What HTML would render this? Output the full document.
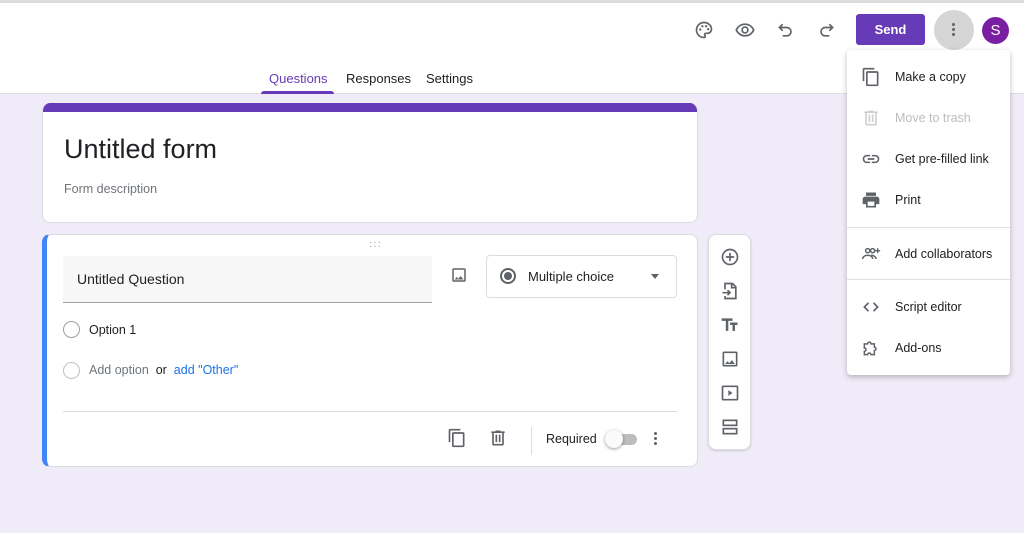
<!DOCTYPE html>
<html><head><style>
*{box-sizing:border-box;margin:0;padding:0}
body{width:1024px;height:533px;overflow:hidden;background:#f0ebf8;font-family:"Liberation Sans",sans-serif;position:relative;color:#202124}
.abs{position:absolute}
#hdr{left:0;top:0;width:1024px;height:94px;background:#fff;border-top:3px solid #dcdcdc;border-bottom:1px solid #e0e0e0}
.tab{top:68px;font-size:13px;color:#202124}
.card{background:#fff;border-radius:8px;border:1px solid #dadce0}
.mi{left:0;width:163px;height:41px;display:flex;align-items:center;font-size:12.5px;color:#202124}
.mi svg{margin-left:14px;margin-right:14px;width:20px;height:20px}
.ic{fill:#5f6368}
</style></head><body>
<div id="hdr" class="abs">
 <svg class="abs" style="left:694px;top:17px" width="20" height="20" viewBox="0 0 24 24"><path fill="none" stroke="#5f6368" stroke-width="2" d="M12 3a9 9 0 0 0 0 18c1 0 1.5-.7 1.5-1.5 0-.4-.2-.7-.4-1-.2-.3-.4-.6-.4-1 0-.8.7-1.5 1.5-1.5H16a5 5 0 0 0 5-5c0-4.4-4-8-9-8z"/><circle cx="7.5" cy="11.5" r="1.4" fill="#5f6368"/><circle cx="10" cy="7.5" r="1.4" fill="#5f6368"/><circle cx="14.5" cy="7.5" r="1.4" fill="#5f6368"/><circle cx="17" cy="11" r="1.4" fill="#5f6368"/></svg>
 <svg class="abs" style="left:734px;top:17px" width="22" height="20" viewBox="0 0 24 24"><path fill="none" stroke="#5f6368" stroke-width="2" d="M1.5 12C4 7 8 5 12 5s8 2 10.5 7C20 17 16 19 12 19s-8-2-10.5-7z"/><circle cx="12" cy="12" r="3.5" fill="none" stroke="#5f6368" stroke-width="2"/></svg>
 <svg class="abs" style="left:776px;top:17px" width="20" height="20" viewBox="0 0 24 24"><path fill="none" stroke="#5f6368" stroke-width="2" d="M8 5L4 9l4 4M4 9h9a5 5 0 0 1 0 10H8"/></svg>
 <svg class="abs" style="left:816px;top:17px" width="20" height="20" viewBox="0 0 24 24"><path fill="none" stroke="#5f6368" stroke-width="2" d="M16 5l4 4-4 4M20 9h-9a5 5 0 0 0 0 10h5"/></svg>
 <div class="abs" style="left:856px;top:11px;width:69px;height:31px;background:#673ab7;border-radius:3px;color:#fff;font-size:13px;font-weight:bold;text-align:center;line-height:31px">Send</div>
 <div class="abs" style="left:934px;top:7px;width:40px;height:40px;border-radius:50%;background:#d5d5d5"></div>
 <div class="abs" style="left:952px;top:20px;width:3px;height:3px;border-radius:50%;background:#5f6368;box-shadow:0 5px 0 #5f6368,0 10px 0 #5f6368"></div>
 <div class="abs" style="left:982px;top:14px;width:27px;height:27px;border-radius:50%;background:#7b1fa2;color:#fff;font-size:15px;text-align:center;line-height:27px">S</div>
 <div class="abs tab" style="left:269px;color:#673ab7">Questions</div>
 <div class="abs tab" style="left:346px">Responses</div>
 <div class="abs tab" style="left:426px">Settings</div>
 <div class="abs" style="left:261px;top:88px;width:73px;height:3px;background:#673ab7;border-radius:3px 3px 0 0"></div>
</div>

<div class="abs card" style="left:42px;top:103px;width:656px;height:120px;border-top:none;overflow:hidden">
 <div style="height:9px;background:#673ab7"></div>
 <div class="abs" style="left:21px;top:31px;font-size:27px">Untitled form</div>
 <div class="abs" style="left:21px;top:79px;font-size:12.5px;color:#70757a">Form description</div>
</div>

<div class="abs card" style="left:42px;top:234px;width:656px;height:233px;border-left:5px solid #4285f4">
 <div class="abs" style="left:322px;top:6px;color:#9aa0a6;font-size:10px;letter-spacing:1px;line-height:4px">···<br>···</div>
 <div class="abs" style="left:16px;top:21px;width:369px;height:47px;background:#f6f7f6;border-bottom:1px solid #9e9e9e"></div>
 <div class="abs" style="left:30px;top:36px;font-size:14px">Untitled Question</div>
 <svg class="abs" style="left:403px;top:31px" width="18" height="18" viewBox="0 0 24 24"><path class="ic" d="M19 5v14H5V5h14m0-2H5a2 2 0 0 0-2 2v14a2 2 0 0 0 2 2h14a2 2 0 0 0 2-2V5a2 2 0 0 0-2-2zm-4.9 10.3l-3 3.8-2-2.5L6 18h12z"/></svg>
 <div class="abs" style="left:439px;top:20px;width:191px;height:43px;border:1px solid #dadce0;border-radius:4px"></div>
 <div class="abs" style="left:453px;top:33px;width:16px;height:16px;border:2px solid #5f6368;border-radius:50%"></div>
 <div class="abs" style="left:457px;top:37px;width:8px;height:8px;background:#5f6368;border-radius:50%"></div>
 <div class="abs" style="left:481px;top:34px;font-size:13px">Multiple choice</div>
 <div class="abs" style="left:604px;top:39px;border:4.5px solid transparent;border-top:5px solid #5f6368"></div>
 <div class="abs" style="left:16px;top:86px;width:17px;height:17px;border:1.5px solid #9aa0a6;border-radius:50%"></div>
 <div class="abs" style="left:42px;top:88px;font-size:12.5px">Option 1</div>
 <div class="abs" style="left:16px;top:127px;width:17px;height:17px;border:1.5px solid #bdc1c6;border-radius:50%"></div>
 <div class="abs" style="left:42px;top:128px;font-size:12.5px;color:#70757a">Add option <span style="color:#202124">&nbsp;or&nbsp;</span> <span style="color:#1a73e8">add "Other"</span></div>
 <div class="abs" style="left:16px;top:176px;width:614px;height:1px;background:#dadce0"></div>
 <svg class="abs" style="left:400px;top:193px" width="20" height="20" viewBox="0 0 24 24"><path class="ic" d="M16 1H4a2 2 0 0 0-2 2v14h2V3h12V1zm3 4H8a2 2 0 0 0-2 2v14a2 2 0 0 0 2 2h11a2 2 0 0 0 2-2V7a2 2 0 0 0-2-2zm0 16H8V7h11v14z"/></svg>
 <svg class="abs" style="left:441px;top:193px" width="20" height="20" viewBox="0 0 24 24"><path class="ic" d="M15 4V3H9v1H4v2h1v13a2 2 0 0 0 2 2h10a2 2 0 0 0 2-2V6h1V4h-5zm2 15H7V6h10v13zM9 8h2v9H9zm4 0h2v9h-2z"/></svg>
 <div class="abs" style="left:484px;top:192px;width:1px;height:28px;background:#dadce0"></div>
 <div class="abs" style="left:499px;top:197px;font-size:12.5px">Required</div>
 <div class="abs" style="left:564px;top:199px;width:26px;height:11px;border-radius:6px;background:#bdbdbd"></div>
 <div class="abs" style="left:558px;top:195px;width:18px;height:18px;border-radius:50%;background:#fafafa;box-shadow:0 1px 3px rgba(0,0,0,.4)"></div>
 <div class="abs" style="left:607px;top:197px;width:3px;height:3px;border-radius:50%;background:#5f6368;box-shadow:0 5px 0 #5f6368,0 10px 0 #5f6368"></div>
</div>

<div class="abs card" style="left:708px;top:234px;width:43px;height:216px;box-shadow:0 1px 2px rgba(0,0,0,.15)">
 <svg class="abs" style="left:11px;top:12px" width="20" height="20" viewBox="0 0 24 24"><circle cx="12" cy="12" r="9" fill="none" stroke="#5f6368" stroke-width="2"/><path d="M12 7v10M7 12h10" stroke="#5f6368" stroke-width="2"/></svg>
 <svg class="abs" style="left:11px;top:46px" width="20" height="20" viewBox="0 0 24 24"><path fill="none" stroke="#5f6368" stroke-width="2" d="M6 10V3h9l4 4v14H6v-3M14 3v5h5M3 14h9m-3-3l3 3-3 3"/></svg>
 <svg class="abs" style="left:11px;top:80px" width="20" height="20" viewBox="0 0 24 24"><path class="ic" d="M2 4v3h5v12h3V7h5V4H2zm19 5h-9v3h3v7h3v-7h3V9z"/></svg>
 <svg class="abs" style="left:11px;top:114px" width="20" height="20" viewBox="0 0 24 24"><path class="ic" d="M19 5v14H5V5h14m0-2H5a2 2 0 0 0-2 2v14a2 2 0 0 0 2 2h14a2 2 0 0 0 2-2V5a2 2 0 0 0-2-2zm-4.9 10.3l-3 3.8-2-2.5L6 18h12z"/></svg>
 <svg class="abs" style="left:11px;top:148px" width="20" height="20" viewBox="0 0 24 24"><rect x="3" y="4" width="18" height="16" rx="1" fill="none" stroke="#5f6368" stroke-width="2"/><path class="ic" d="M10 8.5v7l5-3.5z"/></svg>
 <svg class="abs" style="left:11px;top:182px" width="20" height="20" viewBox="0 0 24 24"><rect x="4" y="4" width="16" height="6" fill="none" stroke="#5f6368" stroke-width="2"/><rect x="4" y="14" width="16" height="6" fill="none" stroke="#5f6368" stroke-width="2"/></svg>
</div>

<div class="abs" style="left:847px;top:50px;width:163px;height:325px;background:#fff;border-radius:4px;box-shadow:0 2px 6px rgba(0,0,0,.25)">
 <div class="abs mi" style="top:6px"><svg viewBox="0 0 24 24"><path class="ic" d="M16 1H4a2 2 0 0 0-2 2v14h2V3h12V1zm3 4H8a2 2 0 0 0-2 2v14a2 2 0 0 0 2 2h11a2 2 0 0 0 2-2V7a2 2 0 0 0-2-2zm0 16H8V7h11v14z"/></svg>Make a copy</div>
 <div class="abs mi" style="top:47px;color:#bdbdbd"><svg viewBox="0 0 24 24"><path fill="#d0d0d0" d="M15 4V3H9v1H4v2h1v13a2 2 0 0 0 2 2h10a2 2 0 0 0 2-2V6h1V4h-5zm2 15H7V6h10v13zM9 8h2v9H9zm4 0h2v9h-2z"/></svg>Move to trash</div>
 <div class="abs mi" style="top:88px"><svg viewBox="0 0 24 24"><path class="ic" d="M3.9 12A3.1 3.1 0 0 1 7 8.9h4V7H7a5 5 0 0 0 0 10h4v-1.9H7A3.1 3.1 0 0 1 3.9 12zM8 13h8v-2H8v2zm9-6h-4v1.9h4a3.1 3.1 0 0 1 0 6.2h-4V17h4a5 5 0 0 0 0-10z"/></svg>Get pre-filled link</div>
 <div class="abs mi" style="top:129px"><svg viewBox="0 0 24 24"><path class="ic" d="M19 8H5a3 3 0 0 0-3 3v6h4v4h12v-4h4v-6a3 3 0 0 0-3-3zm-3 11H8v-5h8v5zm2-12H6V3h12v4z"/></svg>Print</div>
 <div class="abs" style="left:0;top:177px;width:163px;height:1px;background:#e0e0e0"></div>
 <div class="abs mi" style="top:183px"><svg viewBox="0 0 24 24"><circle cx="8" cy="8" r="2.5" fill="none" stroke="#5f6368" stroke-width="1.8"/><circle cx="14" cy="8" r="2.5" fill="none" stroke="#5f6368" stroke-width="1.8"/><path d="M2 18c0-3 3-4.5 6-4.5s6 1.5 6 4.5M12 13.5c3 0 6 1.5 6 4.5" fill="none" stroke="#5f6368" stroke-width="1.8"/><path d="M20 5v6M17 8h6" stroke="#5f6368" stroke-width="1.6"/></svg>Add collaborators</div>
 <div class="abs" style="left:0;top:229px;width:163px;height:1px;background:#e0e0e0"></div>
 <div class="abs mi" style="top:236px"><svg viewBox="0 0 24 24"><path fill="none" stroke="#5f6368" stroke-width="2" d="M9 7l-5 5 5 5M15 7l5 5-5 5"/></svg>Script editor</div>
 <div class="abs mi" style="top:277px"><svg viewBox="0 0 24 24"><path fill="none" stroke="#5f6368" stroke-width="1.8" d="M4 7h4a2 2 0 1 1 4 0h4v4a2 2 0 1 1 0 4v5h-4a2 2 0 1 0-4 0H4v-4a2 2 0 1 0 0-4z"/></svg>Add-ons</div>
</div>
</body></html>
